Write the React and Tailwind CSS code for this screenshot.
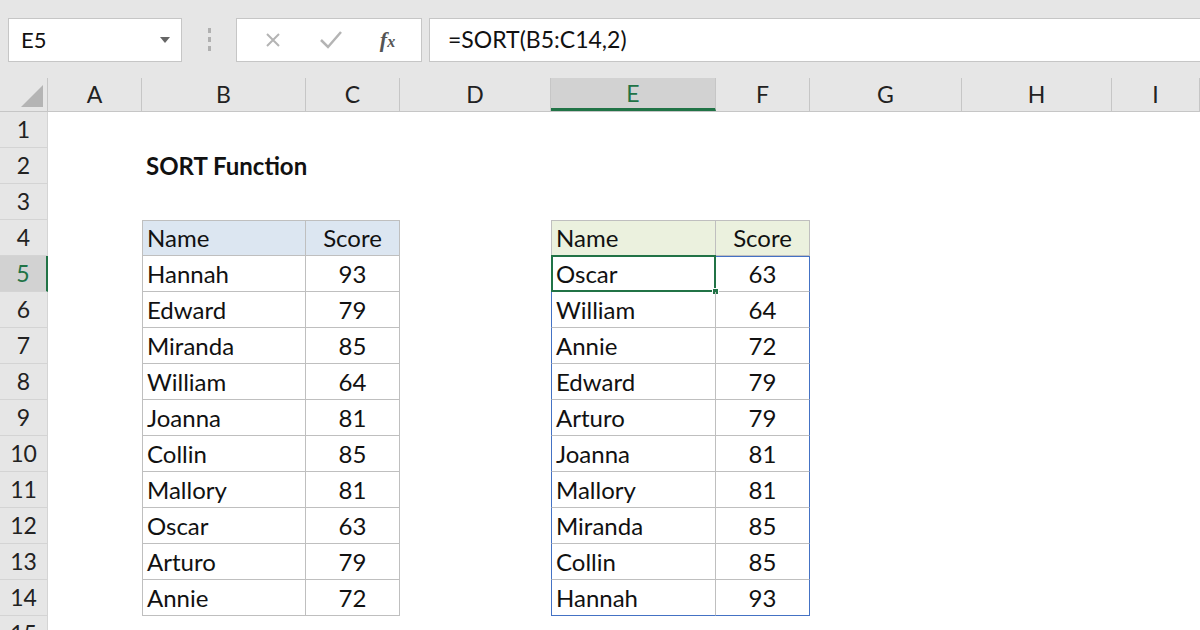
import React from "react";

const cols = [
  ["A", 94], ["B", 164], ["C", 94], ["D", 151], ["E", 165], ["F", 94], ["G", 152], ["H", 150], ["I", 88],
];
const left = [["Hannah",93],["Edward",79],["Miranda",85],["William",64],["Joanna",81],["Collin",85],["Mallory",81],["Oscar",63],["Arturo",79],["Annie",72]];
const right = [["Oscar",63],["William",64],["Annie",72],["Edward",79],["Arturo",79],["Joanna",81],["Mallory",81],["Miranda",85],["Collin",85],["Hannah",93]];

function Cell({ w, children, cls = "" }) {
  return <div style={{ width: w }} className={"h-full shrink-0 flex items-center box-border " + cls}>{children}</div>;
}

function Row({ n }) {
  const c = {};
  if (n === 2) c.B = <Cell w={164} cls="pl-[4px] font-bold whitespace-nowrap">SORT Function</Cell>;
  if (n === 4) {
    c.B = <Cell w={164} cls="pl-[4px] bg-[#dce6f1] border border-[#bfbfbf]">Name</Cell>;
    c.C = <Cell w={94} cls="justify-center bg-[#dce6f1] border border-l-0 border-[#bfbfbf]">Score</Cell>;
    c.E = <Cell w={165} cls="pl-[4px] bg-[#ebf1de] border border-[#bfbfbf]">Name</Cell>;
    c.F = <Cell w={94} cls="justify-center bg-[#ebf1de] border border-l-0 border-[#bfbfbf]">Score</Cell>;
  }
  if (n >= 5 && n <= 14) {
    const i = n - 5;
    c.B = <Cell w={164} cls="pl-[4px] border border-t-0 border-[#bfbfbf]">{left[i][0]}</Cell>;
    c.C = <Cell w={94} cls="justify-center border-r border-b border-[#bfbfbf]">{left[i][1]}</Cell>;
    const last = n === 14;
    c.E = <Cell w={165} cls={"pl-[4px] border-l border-l-[#4472c4] border-r border-r-[#bfbfbf] relative " + (last ? "border-b border-b-[#4472c4]" : "border-b border-b-[#bfbfbf]")}>
      {right[i][0]}
      {n === 5 && <><div className="absolute left-[-1px] top-[-1px] right-[-1px] bottom-[-1px] border-2 border-[#217346]" /><div className="absolute right-[-4px] bottom-[-4px] w-[7px] h-[7px] bg-[#217346] border border-white" /></>}
    </Cell>;
    c.F = <Cell w={94} cls={"justify-center border-r border-r-[#4472c4] " + (n === 5 ? "border-t border-t-[#4472c4] " : "") + (last ? "border-b border-b-[#4472c4]" : "border-b border-b-[#bfbfbf]")}>{right[i][1]}</Cell>;
  }
  const sel = n === 5;
  return (
    <div className="flex h-[36px]">
      <div className={"w-[48px] shrink-0 h-full flex items-center justify-center border-b border-r border-[#d4d4d4] text-[23px] " + (sel ? "bg-[#d2d2d2] text-[#217346] border-r-2 border-r-[#217346]" : "bg-[#e6e6e6] text-[#222]")}>{n}</div>
      {cols.map(([k, w]) => c[k] ? <React.Fragment key={k}>{c[k]}</React.Fragment> : <Cell key={k} w={w} />)}
    </div>
  );
}

export default function App() {
  return (
    <div className="w-[1200px] h-[630px] overflow-hidden bg-white text-[24px] text-[#111]" style={{ fontFamily: "Lato, 'Open Sans', sans-serif" }}>
      <div className="h-[78px] bg-[#e6e6e6] flex items-center pt-[1px]">
        <div className="ml-[8px] w-[174px] h-[44px] bg-white border border-[#c6c6c6] flex items-center justify-between pl-[12px] pr-[10px] text-[22px]">
          <span>E5</span>
          <svg width="12" height="8" viewBox="0 0 12 8"><path d="M1 1h10L6 7z" fill="#666" /></svg>
        </div>
        <div className="w-[54px] flex flex-col items-center gap-[4px]">
          {[0,1,2].map(i => <div key={i} className="w-[3px] h-[5px] bg-[#b0b0b0]" />)}
        </div>
        <div className="w-[186px] h-[44px] bg-white border border-[#c6c6c6] flex items-center justify-around px-[8px]">
          <svg width="20" height="20" viewBox="0 0 20 20"><path d="M4 4l12 12M16 4L4 16" stroke="#b4b4b4" strokeWidth="2" /></svg>
          <svg width="26" height="22" viewBox="0 0 26 22"><path d="M3 11l7 7L23 3" stroke="#b4b4b4" strokeWidth="2.5" fill="none" /></svg>
          <span className="italic font-bold text-[22px] text-[#555]" style={{ fontFamily: "'Liberation Serif', serif" }}>f<span className="text-[16px]">x</span></span>
        </div>
        <div className="ml-[7px] flex-1 h-[44px] bg-white border border-[#c6c6c6] border-r-0 flex items-center pl-[18px] text-[23px]">=SORT(B5:C14,2)</div>
      </div>
      <div className="flex h-[34px] bg-[#e6e6e6] border-b border-[#c6c6c6]">
        <div className="w-[48px] shrink-0 border-r border-[#c6c6c6] relative">
          <svg className="absolute right-[4px] bottom-[4px]" width="22" height="22" viewBox="0 0 22 22"><path d="M22 0V22H0z" fill="#b4b4b4" /></svg>
        </div>
        {cols.map(([k, w]) => (
          <div key={k} style={{ width: w }} className={"shrink-0 flex items-center justify-center border-r border-[#c6c6c6] text-[23px] box-border " + (k === "E" ? "bg-[#d2d2d2] text-[#217346] border-b-[3px] border-b-[#217346]" : "text-[#222]")}>{k}</div>
        ))}
      </div>
      {Array.from({ length: 15 }, (_, i) => <Row key={i} n={i + 1} />)}
    </div>
  );
}
